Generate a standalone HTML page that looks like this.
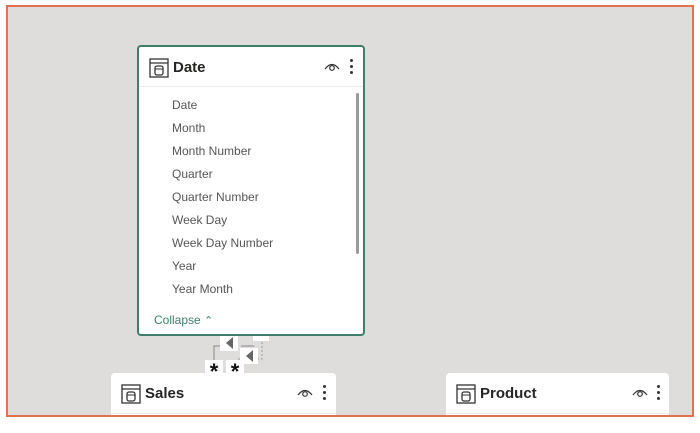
<html><head><style>
body{margin:0;width:700px;height:425px;background:#fff;position:relative;overflow:hidden;font-family:"Liberation Sans",sans-serif}
.frame{position:absolute;left:6px;top:5px;width:684px;height:410px;border:2px solid #e2714f;border-bottom-width:2px;background:#dfdddb;overflow:hidden}
.card{position:absolute;background:#fff;border-radius:4px}
.hd{position:absolute;left:0;right:0;top:0;height:40px;border-bottom:1px solid #ececec}
.ttl{position:absolute;left:34px;top:12px;font-size:15px;font-weight:bold;color:#252423}
.ico{position:absolute;left:10px;top:11px}
.eye{position:absolute;top:14px}
.dots{position:absolute;top:12px;width:3px}
.dots i{display:block;width:3px;height:3px;border-radius:2px;background:#333;margin-bottom:3px}
.it{position:absolute;left:33px;font-size:12px;color:#555}
</style></head><body>
<div class="frame">
<svg style="position:absolute;left:0;top:0" width="684" height="410">
<path d="M218 339 H206 V357" stroke="#888" fill="none"/>
<path d="M233 339 H246" stroke="#888" fill="none"/>
<path d="M254 331 V352 H243" stroke="#999" fill="none" stroke-dasharray="2,2"/>
<path d="M240 352 H230 V358" stroke="#999" fill="none" stroke-dasharray="2,2"/>
<rect x="212" y="328" width="18" height="16" fill="#fff"/>
<path d="M225 330 L218 336 L225 342Z" fill="#666"/>
<rect x="245" y="328" width="16" height="6" fill="#fff"/>
<rect x="232" y="341" width="18" height="16" fill="#fff"/>
<path d="M245 343 L238 349 L245 355Z" fill="#666"/>
<rect x="197" y="353" width="18" height="16" fill="#fff"/>
<rect x="218" y="353" width="18" height="16" fill="#fff"/>
<text x="206" y="372" font-size="22" font-weight="bold" text-anchor="middle" fill="#111" font-family="Liberation Sans">*</text>
<text x="227" y="372" font-size="22" font-weight="bold" text-anchor="middle" fill="#111" font-family="Liberation Sans">*</text>
</svg>
</div>
<div class="card" style="left:137px;top:45px;width:224px;height:287px;border:2px solid #3f7f6a">
<div class="hd" style="height:39px"></div>
<svg class="ico" width="20" height="20" viewBox="0 0 20 20"><rect x="1" y="1" width="18" height="18" fill="none" stroke="#333" stroke-width="1.3"/><path d="M1 5H19" stroke="#333" stroke-width="1.3"/><rect x="6" y="8" width="8" height="9" rx="2" fill="none" stroke="#333" stroke-width="1.3"/><path d="M6 11H14" stroke="#333"/></svg>
<div class="ttl" style="top:12px">Date</div>
<svg class="eye" style="left:185px" width="16" height="10"><path d="M1 8 Q8 -1 15 8" fill="none" stroke="#333" stroke-width="1.2"/><circle cx="8" cy="7" r="2.3" fill="none" stroke="#333" stroke-width="1.2"/></svg>
<div class="dots" style="left:211px"><i></i><i></i><i></i></div>
<div class="it" style="top:51px">Date</div>
<div class="it" style="top:74px">Month</div>
<div class="it" style="top:97px">Month Number</div>
<div class="it" style="top:120px">Quarter</div>
<div class="it" style="top:143px">Quarter Number</div>
<div class="it" style="top:166px">Week Day</div>
<div class="it" style="top:189px">Week Day Number</div>
<div class="it" style="top:212px">Year</div>
<div class="it" style="top:235px">Year Month</div>
<div style="position:absolute;left:217px;top:46px;width:3px;height:161px;background:#9a9a9a;border-radius:2px"></div>
<div style="position:absolute;left:15px;top:266px;font-size:12px;color:#3f7f6a">Collapse <span style="font-size:11px">&#8963;</span></div>
</div>
<div class="card" style="left:111px;top:373px;width:225px;height:60px">
<div class="hd"></div>
<svg class="ico" width="20" height="20" viewBox="0 0 20 20"><rect x="1" y="1" width="18" height="18" fill="none" stroke="#333" stroke-width="1.3"/><path d="M1 5H19" stroke="#333" stroke-width="1.3"/><rect x="6" y="8" width="8" height="9" rx="2" fill="none" stroke="#333" stroke-width="1.3"/><path d="M6 11H14" stroke="#333"/></svg>
<div class="ttl">Sales</div>
<svg class="eye" style="left:186px" width="16" height="10"><path d="M1 8 Q8 -1 15 8" fill="none" stroke="#333" stroke-width="1.2"/><circle cx="8" cy="7" r="2.3" fill="none" stroke="#333" stroke-width="1.2"/></svg>
<div class="dots" style="left:212px"><i></i><i></i><i></i></div>
</div>
<div class="card" style="left:446px;top:373px;width:223px;height:60px">
<div class="hd"></div>
<svg class="ico" width="20" height="20" viewBox="0 0 20 20"><rect x="1" y="1" width="18" height="18" fill="none" stroke="#333" stroke-width="1.3"/><path d="M1 5H19" stroke="#333" stroke-width="1.3"/><rect x="6" y="8" width="8" height="9" rx="2" fill="none" stroke="#333" stroke-width="1.3"/><path d="M6 11H14" stroke="#333"/></svg>
<div class="ttl">Product</div>
<svg class="eye" style="left:186px" width="16" height="10"><path d="M1 8 Q8 -1 15 8" fill="none" stroke="#333" stroke-width="1.2"/><circle cx="8" cy="7" r="2.3" fill="none" stroke="#333" stroke-width="1.2"/></svg>
<div class="dots" style="left:211px"><i></i><i></i><i></i></div>
</div>
<div style="position:absolute;left:0;top:415px;width:700px;height:10px;background:#fff"></div>
<div style="position:absolute;left:6px;top:415px;width:688px;height:2px;background:#e2714f"></div>
<div style="position:absolute;left:692px;top:5px;width:2px;height:412px;background:#e2714f"></div>
</body></html>
